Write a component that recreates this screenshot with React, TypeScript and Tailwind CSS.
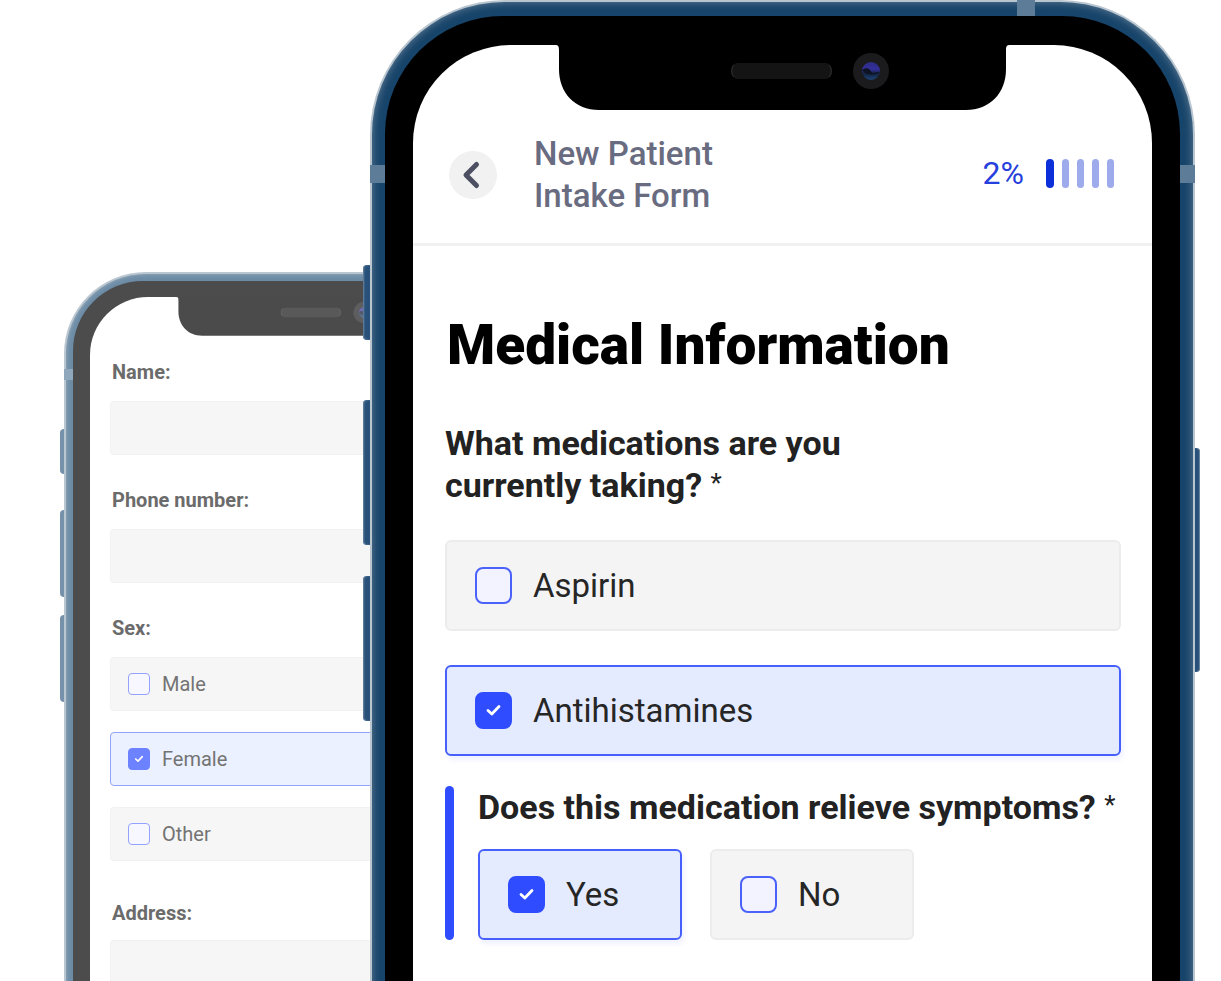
import React from "react";

function Check({ className }: { className: string }) {
  return (
    <svg viewBox="0 0 37 37" aria-hidden="true" className={className}>
      <path
        d="M13 18.500 L16.800 22 L24 14.500"
        fill="none"
        stroke="#fff"
        strokeWidth="2.8"
        strokeLinecap="round"
        strokeLinejoin="round"
      />
    </svg>
  );
}

function Notch({ id, className }: { id: string; className: string }) {
  return (
    <svg viewBox="0 0 455 65" aria-hidden="true" className={className}>
      <defs>
        <linearGradient id={id} x1="0" y1="0" x2="0" y2="1">
          <stop offset="0" stopColor="#2c2c86" />
          <stop offset="0.4" stopColor="#33309a" />
          <stop offset="0.65" stopColor="#12233f" />
          <stop offset="1" stopColor="#1d4478" />
        </linearGradient>
      </defs>
      <path
        d="M0 0 C3 0 4 1 4 5 V24 C4 48 20 65 44 65 H411 C435 65 451 48 451 24 V5 C451 1 452 0 455 0 Z"
        fill="#000"
      />
      <rect x="176" y="18" width="101" height="16" rx="7" fill="#141414" />
      <path d="M179 20 C176 23 176 29 179 32 M274 20 C277 23 277 29 274 32" fill="none" stroke="#303030" />
      <circle cx="316" cy="26" r="18" fill="#1b1b1d" />
      <circle cx="316" cy="26" r="9" fill={"url(#" + id + ")"} />
      <path d="M307 25 C311 22 315 23 317 28 L325 27 C321 30 311 31 307 25 Z" fill="#0d1322" />
    </svg>
  );
}

function Option({ label, checked, className = "" }: { label: string; checked?: boolean; className?: string }) {
  return (
    <label
      className={
        "flex items-center gap-[21px] rounded-md border-2 border-[#ececec] bg-[#f4f4f4] px-7 py-[22px] text-[33px] leading-[43px] text-[#262626] has-[:checked]:border-[#4860fb] has-[:checked]:bg-[#e4ebff] has-[:checked]:shadow-[2px_4px_5px_rgba(60,90,255,0.08)] " +
        className
      }
    >
      <span className="grid shrink-0">
        <input
          type="checkbox"
          defaultChecked={checked}
          className="peer size-[37px] appearance-none rounded-lg border-2 border-[#4b62fa] bg-[#f3f3ff] [grid-area:1/1] checked:border-[#2f4dff] checked:bg-[#2f4dff]"
        />
        <Check className="pointer-events-none hidden size-[37px] [grid-area:1/1] peer-checked:block" />
      </span>
      {label}
    </label>
  );
}

function SmallOption({ label, checked }: { label: string; checked?: boolean }) {
  return (
    <label className="flex items-center gap-3 rounded border border-[#f1f1f1] bg-[#f6f6f6] px-[17px] py-[14px] text-[20px] leading-[24px] text-[#737373] has-[:checked]:border-[#93a2fc] has-[:checked]:bg-[#ecf1ff]">
      <span className="grid shrink-0">
        <input
          type="checkbox"
          defaultChecked={checked}
          className="peer size-[22px] appearance-none rounded border border-[#93a2fc] bg-[#f7f7ff] [grid-area:1/1] checked:border-[#6d82ff] checked:bg-[#6d82ff]"
        />
        <Check className="pointer-events-none hidden size-[22px] [grid-area:1/1] peer-checked:block" />
      </span>
      {label}
    </label>
  );
}

const smallLabel = "block pl-0.5 text-[20px] font-bold leading-[24px] text-[#6b6b6b]";
const smallInput = "block h-[54px] w-full rounded border border-[#f1f1f1] bg-[#f6f6f6] px-4 text-[20px] text-[#737373]";

function BackPhone() {
  const key = "absolute -left-[6px] w-1 rounded-l-sm bg-[#7592aa]";
  return (
    <section
      aria-label="Patient details"
      className="relative mt-[272px] -mr-[188px] flex flex-col rounded-t-[82px] border-2 border-b-0 border-[#bac6d0] bg-[#6c8ba5] px-[7px] pt-[7px] shadow-[inset_0_0_5px_#9db0c0]"
    >
      <span className={key + " top-[155px] h-[45px]"} />
      <span className={key + " top-[236px] h-[87px]"} />
      <span className={key + " top-[341px] h-[87px]"} />
      <span className="absolute -left-[2px] top-[95px] h-[11px] w-[9px] bg-[#8fa8bc]" />
      <div className="flex grow flex-col rounded-t-[70px] bg-[#4c4c4c] px-[17px] pt-4">
        <div className="flex grow flex-col rounded-t-[58px] bg-white">
          <Notch id="lens-back" className="mx-auto block w-[271px] opacity-70" />
          <form className="flex grow flex-col px-5 pt-6">
            <label htmlFor="name" className={smallLabel}>Name:</label>
            <input id="name" type="text" className={smallInput + " mt-[17px]"} />
            <label htmlFor="phone" className={smallLabel + " mt-[33px]"}>Phone number:</label>
            <input id="phone" type="tel" className={smallInput + " mt-[17px]"} />
            <fieldset className="mt-[33px]">
              <legend className={smallLabel}>Sex:</legend>
              <div className="mt-[17px] flex flex-col gap-[21px]">
                <SmallOption label="Male" />
                <SmallOption label="Female" checked />
                <SmallOption label="Other" />
              </div>
            </fieldset>
            <label htmlFor="address" className={smallLabel + " mt-10"}>Address:</label>
            <textarea
              id="address"
              className="mt-[15px] block min-h-[40px] w-full grow resize-none rounded-t border border-b-0 border-[#f1f1f1] bg-[#f6f6f6] px-4"
            />
          </form>
        </div>
      </div>
    </section>
  );
}

function Progress() {
  return (
    <div className="flex items-center gap-[22px] pb-1">
      <span className="text-[32px] leading-[32px] text-[#2540dc]">2%</span>
      <div className="flex gap-2">
        {[0, 1, 2, 3, 4].map((step) => (
          <span
            key={step}
            className={step === 0 ? "h-[29px] w-2 rounded-full bg-[#0b2fd8]" : "h-[29px] w-[7px] rounded-full bg-[#9daaec]"}
          />
        ))}
      </div>
    </div>
  );
}

function Required() {
  return <span className="align-[5px] text-[26px] font-normal leading-none">*</span>;
}

function FrontPhone() {
  const key = "absolute -left-[9px] w-[7px] rounded-l-sm bg-[#27507a] shadow-[inset_1px_0_2px_#7089a0]";
  return (
    <section
      aria-label="New patient intake form"
      className="relative z-10 flex flex-col rounded-t-[135px] border-2 border-b-0 border-[#b9c6d0] bg-[#17446a] px-[13px] pt-[14px] shadow-[inset_0_0_8px_#6a8298]"
    >
      <span className={key + " top-[263px] h-[75px]"} />
      <span className={key + " top-[398px] h-[145px]"} />
      <span className={key + " top-[574px] h-[145px]"} />
      <span className="absolute -right-[7px] top-[446px] h-[224px] w-[5px] rounded-r-sm bg-[#27507a] shadow-[inset_-1px_0_1px_#7089a0]" />
      <span className="absolute -left-[2px] top-[163px] h-[18px] w-[15px] bg-[#5d7c98]" />
      <span className="absolute -right-[2px] top-[163px] h-[18px] w-[15px] bg-[#5d7c98]" />
      <span className="absolute -top-[2px] right-[158px] h-4 w-[18px] bg-[#5d7c98]" />
      <div className="flex grow flex-col rounded-t-[118px] bg-black px-7 pt-[29px]">
        <div className="grow rounded-t-[98px] bg-white">
          <Notch id="lens-front" className="mx-auto block w-[455px]" />
          <header className="flex items-center border-b-[3px] border-[#f1f1f2] pb-[26px] pl-9 pr-[38px] pt-[23px]">
            <button type="button" aria-label="Back" className="grid size-12 place-items-center rounded-full bg-[#f1f1f1]">
              <svg viewBox="0 0 48 48" aria-hidden="true" className="size-12">
                <path
                  d="M27.500 13.500 L17 24 L27.500 34.500"
                  fill="none"
                  stroke="#4d5063"
                  strokeWidth="5"
                  strokeLinecap="round"
                  strokeLinejoin="round"
                />
              </svg>
            </button>
            <p className="ml-[37px] grow text-[33px] font-medium leading-[42px] text-[#696c80]">
              New Patient
              <br />
              Intake Form
            </p>
            <Progress />
          </header>
          <form className="pb-10 pl-8 pr-[31px] pt-[69px]">
            <h1 className="pl-0.5 text-[55px] font-black leading-[60px] text-black">Medical Information</h1>
            <fieldset className="mt-[47px]">
              <legend className="text-[34px] font-bold leading-[42px] text-[#222]">
                What medications are you
                <br />
                currently taking? <Required />
              </legend>
              <div className="mt-[34px] flex flex-col gap-[34px]">
                <Option label="Aspirin" />
                <Option label="Antihistamines" checked />
              </div>
            </fieldset>
            <div className="mt-[30px] flex gap-6">
              <span className="w-[9px] shrink-0 rounded-full bg-[#2f4dff]" />
              <fieldset className="grow">
                <legend className="text-[34px] font-bold leading-[42px] text-[#222]">
                  Does this medication relieve symptoms? <Required />
                </legend>
                <div className="mt-[21px] flex gap-7">
                  <Option label="Yes" checked className="w-[204px]" />
                  <Option label="No" className="w-[204px]" />
                </div>
              </fieldset>
            </div>
          </form>
        </div>
      </div>
    </section>
  );
}

export default function App() {
  return (
    <main className="grid min-h-screen grid-cols-[minmax(0,306fr)_minmax(0,825fr)] overflow-hidden bg-white pl-16 pr-[26px] font-[Roboto,sans-serif]">
      <BackPhone />
      <FrontPhone />
    </main>
  );
}
